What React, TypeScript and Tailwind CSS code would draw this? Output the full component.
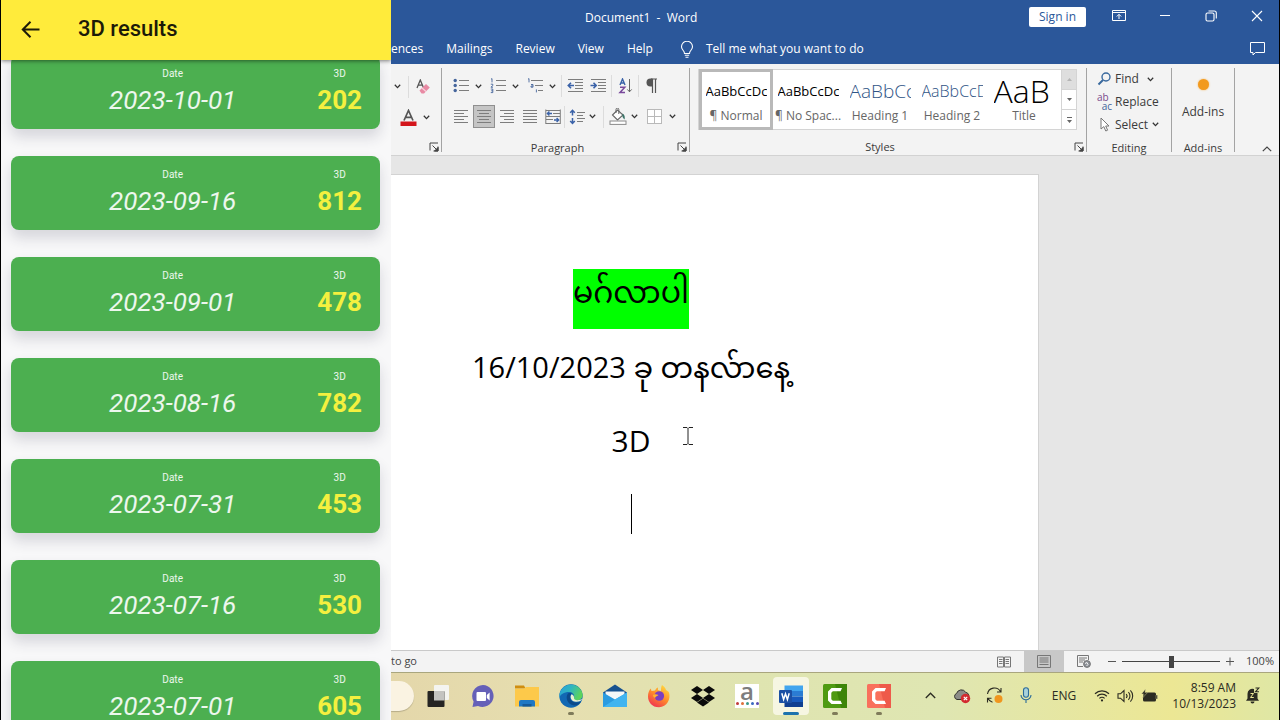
import type { ReactNode } from 'react';

interface Result {
  date: string;
  number: string;
}

interface StyleItem {
  name: string;
  sample: string;
  sampleClass: string;
  active?: boolean;
}

interface TaskApp {
  name: string;
  icon: ReactNode;
  state?: 'open' | 'active';
}

const results: Result[] = [
  { date: '2023-10-01', number: '202' },
  { date: '2023-09-16', number: '812' },
  { date: '2023-09-01', number: '478' },
  { date: '2023-08-16', number: '782' },
  { date: '2023-07-31', number: '453' },
  { date: '2023-07-16', number: '530' },
  { date: '2023-07-01', number: '605' },
];

const styleItems: StyleItem[] = [
  { name: '¶ Normal', sample: 'AaBbCcDc', sampleClass: 'text-[13px] text-black', active: true },
  { name: '¶ No Spac...', sample: 'AaBbCcDc', sampleClass: 'text-[13px] text-black' },
  { name: 'Heading 1', sample: 'AaBbCc', sampleClass: 'text-[19px] font-light text-[#2f5486]' },
  { name: 'Heading 2', sample: 'AaBbCcD', sampleClass: 'text-[16px] font-light text-[#2f5486]' },
  { name: 'Title', sample: 'AaB', sampleClass: 'text-[32px] font-light text-black' },
];

/* ---------- phone ---------- */

function ResultCard({ date, number }: Result) {
  return (
    <li className="flex justify-between rounded-lg bg-[#4caf50] py-[13px] pr-[18px] pl-[98px] shadow-[0_8px_14px_rgba(40,40,70,0.16)]">
      <div className="flex flex-col items-center gap-1">
        <span className="text-[10px] leading-3 text-white/90">Date</span>
        <span className="text-[26px] leading-8 text-white/90 italic">{date}</span>
      </div>
      <div className="flex flex-col items-center gap-1">
        <span className="text-[10px] leading-3 text-white/90">3D</span>
        <span className="text-[26px] leading-8 font-bold text-[#f4f03f]">{number}</span>
      </div>
    </li>
  );
}

function PhonePanel() {
  return (
    <aside className="flex w-[391px] shrink-0 flex-col overflow-hidden border-l border-black bg-[#f8f8f9] font-['Roboto',sans-serif]">
      <header className="relative z-10 flex h-[60px] shrink-0 items-center gap-9 bg-[#ffeb3b] pb-0.5 pl-[19px] shadow-[0_1px_4px_rgba(0,0,0,0.5)]">
        <button aria-label="Back" className="mt-0.5">
          <svg width="22" height="22" viewBox="0 0 22 22" fill="none" stroke="#1c1a08" strokeWidth="2">
            <path d="M19.5 10.5H3.5M10.5 2.8L2.8 10.5l7.7 7.7" />
          </svg>
        </button>
        <h1 className="text-[22px] leading-7 font-medium text-[#1c1a08]">3D results</h1>
      </header>
      <ul className="-mt-[5px] flex flex-col gap-[27px] pr-[11px] pl-2.5">
        {results.map((r) => (
          <ResultCard key={r.date} {...r} />
        ))}
      </ul>
    </aside>
  );
}

/* ---------- small ribbon parts ---------- */

function Chevron({ className = 'w-[18px]' }: { className?: string }) {
  return (
    <span className={`flex shrink-0 justify-center ${className}`}>
      <svg width="7" height="5" viewBox="0 0 7 5" fill="none" stroke="#333" strokeWidth="1.3">
        <path d="M0.8 0.8L3.5 3.6L6.2 0.8" />
      </svg>
    </span>
  );
}

function Sep({ className = '' }: { className?: string }) {
  return <span className={`h-[22px] w-px shrink-0 bg-[#dcdcdc] ${className}`} />;
}

function Launcher({ label }: { label: string }) {
  return (
    <button aria-label={label} className="absolute right-0.5 bottom-0">
      <svg width="10" height="10" viewBox="0 0 10 10" fill="none" stroke="#444" strokeWidth="1">
        <path d="M1 8.5V1H9M3.5 3.5L8 8M9 4.5V9H4.5" />
        <path d="M5.5 9H9V5.5Z" fill="#444" />
      </svg>
    </button>
  );
}

// Horizontal rules given as [x1, x2, y] on a 16px grid
function Lines({ rows, children }: { rows: number[][]; children?: ReactNode }) {
  return (
    <svg className="shrink-0" width="16" height="16" viewBox="0 0 16 16" fill="none">
      {rows.map(([a, b, y]) => (
        <path key={`${a}-${y}`} d={`M${a} ${y}H${b}`} stroke="#7d7d7d" />
      ))}
      {children}
    </svg>
  );
}

const alignLeft = [[1, 15, 1.5], [1, 11, 4.5], [1, 15, 7.5], [1, 11, 10.5], [1, 15, 13.5]];
const alignCenter = [[1, 15, 1.5], [3, 13, 4.5], [1, 15, 7.5], [3, 13, 10.5], [1, 15, 13.5]];
const alignRight = [[1, 15, 1.5], [5, 15, 4.5], [1, 15, 7.5], [5, 15, 10.5], [1, 15, 13.5]];
const justify = [[1, 15, 1.5], [1, 15, 4.5], [1, 15, 7.5], [1, 15, 10.5], [1, 15, 13.5]];
const indentRows = [[1, 16, 1.5], [8, 16, 4.5], [8, 16, 7.5], [8, 16, 10.5], [1, 16, 13.5]];

function Tool({ label, active, children }: { label: string; active?: boolean; children: ReactNode }) {
  return (
    <button
      aria-label={label}
      className={`flex h-[23px] w-[22px] shrink-0 items-center justify-center ${active ? 'border border-[#8f8f8f] bg-[#c5c5c5]' : ''}`}
    >
      {children}
    </button>
  );
}

function FontGroup() {
  return (
    <section className="relative flex w-[51px] shrink-0 flex-col border-r border-[#a3a3a3]">
      <div className="mt-[7px] flex h-[23px] items-center">
        <Chevron className="w-[13px]" />
        <Sep className="mr-[7px] ml-1" />
        <button aria-label="Clear formatting">
          <svg width="16" height="16" viewBox="0 0 16 16">
            <path d="M1 9L4.3 1L7.6 9M2.3 6.2H6.4" fill="none" stroke="#555" strokeWidth="1.3" />
            <path d="M3.5 11.5L10 5L13.8 8.5L8 14.5H5.5Z" fill="#e88aa4" />
            <path d="M6 9L10 12.5" stroke="#f8d3dc" strokeWidth="1.2" />
          </svg>
        </button>
      </div>
      <div className="mt-2 flex h-[23px] items-center pl-[9px]">
        <button aria-label="Font color">
          <svg width="17" height="18" viewBox="0 0 17 18">
            <path d="M4 11.5L8.5 1.5L13 11.5M5.6 8.3H11.4" fill="none" stroke="#555" strokeWidth="1.7" />
            <rect x="0.5" y="12.5" width="16" height="4.5" fill="#d3151b" />
          </svg>
        </button>
        <Chevron />
      </div>
      <Launcher label="Font settings" />
    </section>
  );
}

function ParagraphGroup() {
  return (
    <section className="relative flex w-[248px] shrink-0 flex-col border-r border-[#a3a3a3]">
      <div className="mt-[7px] flex h-[23px] items-center pl-[11px]">
        <button aria-label="Bullets" className="flex items-center">
          <Lines rows={[[6, 16, 2.5], [6, 16, 7.5], [6, 16, 12.5]]}>
            <circle cx="2.2" cy="2.5" r="1.7" fill="#45659c" />
            <circle cx="2.2" cy="7.5" r="1.7" fill="#45659c" />
            <circle cx="2.2" cy="12.5" r="1.7" fill="#45659c" />
          </Lines>
          <Chevron />
        </button>
        <button aria-label="Numbering" className="ml-[3px] flex items-center">
          <Lines rows={[[6, 16, 2.5], [6, 16, 7.5], [6, 16, 12.5]]}>
            <path
              d="M1 1.2L2 0.6V4.4M0.8 6.2H2.8V7.6L0.9 9.2H3M0.8 11H2.8V14.6H0.8M1.2 12.8H2.8"
              stroke="#45659c"
              strokeWidth="0.9"
            />
          </Lines>
          <Chevron />
        </button>
        <button aria-label="Multilevel list" className="ml-[3px] flex items-center">
          <Lines rows={[[4, 16, 2.5], [8, 16, 7.5], [11, 16, 12.5]]}>
            <path d="M1 1.2L2 0.6V4.4M4 6.5H6V9.2H4V8H6M9.4 11.4V14.4" stroke="#45659c" strokeWidth="0.9" />
          </Lines>
          <Chevron />
        </button>
        <Sep className="mr-[5px]" />
        <button aria-label="Decrease indent">
          <Lines rows={indentRows}>
            <path d="M7 7.5H1.5M4 4.8L1.3 7.5L4 10.2" stroke="#3a62a8" strokeWidth="1.6" />
          </Lines>
        </button>
        <button aria-label="Increase indent" className="ml-[7px]">
          <Lines rows={indentRows}>
            <path d="M0.5 7.5H6M3.5 4.8L6.2 7.5L3.5 10.2" stroke="#3a62a8" strokeWidth="1.6" />
          </Lines>
        </button>
        <Sep className="mx-[5px]" />
        <button aria-label="Sort">
          <svg width="16" height="16" viewBox="0 0 16 16" fill="none">
            <path d="M3 7L5.5 1L8 7M3.9 5H7.1" stroke="#3a62a8" strokeWidth="1.4" />
            <path d="M3 9.2H7.8L3 14.4H8" stroke="#7a4a9c" strokeWidth="1.5" />
            <path d="M12.5 1V14M10.3 11.4L12.5 13.8L14.7 11.4" stroke="#666" />
          </svg>
        </button>
        <Sep className="mx-[5px]" />
        <button aria-label="Show paragraph marks">
          <svg width="16" height="16" viewBox="0 0 16 16">
            <path d="M7 1H13M8.5 1V15M11.5 1V15" fill="none" stroke="#555" strokeWidth="1.2" />
            <path d="M8.5 0.5H6.5A4 4 0 0 0 6.5 8.5H8.5Z" fill="#555" />
          </svg>
        </button>
      </div>
      <div className="mt-2 flex h-[23px] items-center pl-2">
        <div className="flex gap-px">
          <Tool label="Align left"><Lines rows={alignLeft} /></Tool>
          <Tool label="Center" active><Lines rows={alignCenter} /></Tool>
          <Tool label="Align right"><Lines rows={alignRight} /></Tool>
          <Tool label="Justify"><Lines rows={justify} /></Tool>
          <Tool label="Distributed">
            <Lines rows={[[1, 15, 1.5], [8, 15, 4.5], [1, 15, 7.5], [1, 8, 10.5], [1, 15, 14.5]]}>
              <path d="M0.8 0.5V15M15.3 0.5V15" stroke="#7d7d7d" />
              <path d="M7 4.5H2.5M4.4 2.6L2.4 4.5L4.4 6.4M9 11H13.5M11.6 9.1L13.6 11L11.6 12.9" stroke="#3a62a8" strokeWidth="1.4" />
            </Lines>
          </Tool>
        </div>
        <Sep className="mr-1" />
        <button aria-label="Line spacing" className="flex items-center">
          <Lines rows={[[8, 16, 3.5], [8, 14, 6.5], [8, 16, 9.5], [8, 14, 12.5]]}>
            <path d="M3.5 1.5V6.5M1.2 3.7L3.5 1.3L5.8 3.7M3.5 9V14M1.2 12L3.5 14.4L5.8 12" stroke="#3a62a8" strokeWidth="1.5" />
          </Lines>
          <Chevron className="w-3.5" />
        </button>
        <Sep className="mr-[5px] ml-1" />
        <button aria-label="Shading" className="flex items-center">
          <svg width="18" height="17" viewBox="0 0 18 17" fill="none">
            <path d="M3.5 7L8.5 2L14 7L8.5 12Z" stroke="#666" strokeWidth="1.1" fill="#fff" />
            <path d="M7 5V1.5A1.4 1.4 0 0 1 9.8 1.5V6" stroke="#666" />
            <path d="M13.5 5.5C16 7 16 9 15.6 11.5C13.5 10 13 8.5 13.5 5.5Z" fill="#3a7468" />
            <rect x="1" y="13" width="16" height="3.4" fill="#fff" stroke="#8a8a8a" />
          </svg>
          <Chevron className="w-3.5" />
        </button>
        <button aria-label="Borders" className="ml-1.5 flex items-center">
          <svg width="16" height="16" viewBox="0 0 16 16" fill="#fff" stroke="#b9b9b9">
            <rect x="0.5" y="0.5" width="14" height="14" />
            <path d="M7.5 1V14M1 7.5H14" />
          </svg>
          <Chevron />
        </button>
      </div>
      <span className="mt-3 pr-4 text-center text-[11px] leading-4">Paragraph</span>
      <Launcher label="Paragraph settings" />
    </section>
  );
}

function StylesGroup() {
  return (
    <section className="relative flex w-[397px] shrink-0 flex-col border-r border-[#a3a3a3] px-2">
      <div className="mt-px flex h-[61px] w-[379px] shrink-0 border border-[#d4d4d4] bg-white pl-px">
        {styleItems.map((s) => (
          <button
            key={s.name}
            className={`flex w-[72px] shrink-0 flex-col items-center ${s.active ? 'outline-3 -outline-offset-2 outline-[#b9b9b9]' : ''}`}
          >
            <span className={`mt-1 h-[34px] w-[61px] overflow-hidden text-left leading-[34px] whitespace-nowrap ${s.sampleClass}`}>
              {s.sample}
            </span>
            <span className="text-[12px] leading-4 whitespace-nowrap text-[#666]">{s.name}</span>
          </button>
        ))}
        <div className="ml-auto flex w-[15px] flex-col divide-y divide-[#d4d4d4] border-l border-[#d4d4d4]">
          <button aria-label="Previous styles" className="flex flex-1 items-center justify-center bg-[#dedede]">
            <svg width="5" height="3" viewBox="0 0 5 3"><path d="M0 3L2.5 0L5 3Z" fill="#b5b5b5" /></svg>
          </button>
          <button aria-label="Next styles" className="flex flex-1 items-center justify-center">
            <svg width="5" height="3" viewBox="0 0 5 3"><path d="M0 0L2.5 3L5 0Z" fill="#666" /></svg>
          </button>
          <button aria-label="More styles" className="flex flex-1 items-center justify-center">
            <svg width="5" height="6" viewBox="0 0 5 6"><path d="M0 0H5V1H0ZM0 3L2.5 6L5 3Z" fill="#666" /></svg>
          </button>
        </div>
      </div>
      <span className="mt-[9px] pr-4 text-center text-[11px] leading-4">Styles</span>
      <Launcher label="Styles settings" />
    </section>
  );
}

function EditingGroup() {
  return (
    <section className="flex w-[85px] shrink-0 flex-col border-r border-[#a3a3a3] text-[12px]">
      <div className="flex flex-col pl-2.5">
        <button className="flex h-[22px] items-center gap-[3px]">
          <svg width="15" height="14" viewBox="0 0 15 14" fill="none">
            <circle cx="9" cy="5" r="4" stroke="#39699e" strokeWidth="1.4" />
            <path d="M6 8L1.5 12.5" stroke="#39699e" strokeWidth="2" />
          </svg>
          Find
          <Chevron />
        </button>
        <button className="flex h-[23px] items-center gap-[3px]">
          <span className="flex w-[15px] flex-col text-left text-[10px] leading-[9px] text-[#7a4a8c]">
            ab
            <span className="text-right text-[#45659c]">ac</span>
          </span>
          Replace
        </button>
        <button className="flex h-[23px] items-center gap-[3px]">
          <svg width="15" height="15" viewBox="0 0 15 15" fill="#fff" stroke="#777">
            <path d="M4 1V12L6.8 9.6L8.8 14L10.6 13.2L8.7 9H12Z" />
          </svg>
          Select
          <Chevron className="-ml-px w-2.5" />
        </button>
      </div>
      <span className="mt-1 text-center text-[11px] leading-4">Editing</span>
    </section>
  );
}

function Ribbon() {
  return (
    <div className="flex h-[92px] shrink-0 border-b border-[#d2d2d2] bg-[#f3f3f3] pt-1 pb-[3px] text-[#3b3b3b]">
      <FontGroup />
      <ParagraphGroup />
      <StylesGroup />
      <EditingGroup />
      <section className="flex w-[63px] shrink-0 flex-col items-center border-r border-[#a3a3a3]">
        <button className="flex flex-col items-center text-[12px] leading-4">
          <span className="mt-[11px] mb-3.5 size-[11px] rounded-full bg-[#f29a1f] shadow-[0_0_2px_#f5b55a]" />
          Add-ins
        </button>
        <span className="mt-5 text-[11px] leading-4">Add-ins</span>
      </section>
      <button aria-label="Collapse ribbon" className="mt-auto mr-[7px] ml-auto">
        <svg width="10" height="6" viewBox="0 0 10 6" fill="none" stroke="#444" strokeWidth="1.2">
          <path d="M0.8 5.2L5 1L9.2 5.2" />
        </svg>
      </button>
    </div>
  );
}

/* ---------- Word window ---------- */

function TitleBar() {
  return (
    <header className="shrink-0 bg-[#2b579a] text-[12px] text-white">
      <div className="flex h-[34px] items-center">
        <span className="ml-[194px] pt-0.5 whitespace-pre">Document1  -  Word</span>
        <button className="mr-[26px] ml-auto h-5 w-[57px] rounded-xs bg-white text-[#2b579a]">Sign in</button>
        <div className="flex items-center gap-8 pr-[15px] pb-0.5">
          <button aria-label="Ribbon display options">
            <svg width="14" height="12" viewBox="0 0 14 12" fill="none" stroke="#fff">
              <path d="M0.5 0.5H13.5V10.5H0.5ZM0.5 2.5H13.5M7 9V4.5M4.8 6.5L7 4.3L9.2 6.5" />
            </svg>
          </button>
          <button aria-label="Minimize">
            <svg width="14" height="12" viewBox="0 0 14 12"><path d="M2 5.5H12" stroke="#fff" /></svg>
          </button>
          <button aria-label="Restore">
            <svg width="14" height="12" viewBox="0 0 14 12" fill="none" stroke="#fff" strokeWidth="1.1">
              <rect x="2" y="3" width="8" height="8" rx="1.5" />
              <path d="M4.5 1H10.3A2 2 0 0 1 12.3 3V8.5" />
            </svg>
          </button>
          <button aria-label="Close">
            <svg width="14" height="12" viewBox="0 0 14 12" stroke="#fff" strokeWidth="1.1">
              <path d="M2 1L12 11M12 1L2 11" />
            </svg>
          </button>
        </div>
      </div>
      <nav className="flex h-[30px] items-center gap-[23px] whitespace-nowrap">
        <a href="#references">ences</a>
        <a href="#mailings">Mailings</a>
        <a href="#review">Review</a>
        <a href="#view">View</a>
        <a href="#help">Help</a>
        <button className="ml-1 flex items-center gap-3">
          <svg width="14" height="17" viewBox="0 0 14 17" fill="none" stroke="#fff" strokeWidth="1.1">
            <path d="M4.5 12.5C4.5 9.5 1.5 9 1.5 5.8A5.4 5.4 0 0 1 12.5 5.8C12.5 9 9.5 9.5 9.5 12.5ZM4.8 14.3H9.2M5.5 16.2H8.5" />
          </svg>
          Tell me what you want to do
        </button>
        <button aria-label="Comments" className="mr-3.5 ml-auto">
          <svg width="16" height="14" viewBox="0 0 16 14" fill="none" stroke="#fff">
            <path d="M1.5 0.5H15.5V10.5H6.5L4 13V10.5H1.5Z" />
          </svg>
        </button>
      </nav>
    </header>
  );
}

function DocumentArea() {
  return (
    <main className="min-h-0 flex-1 overflow-hidden bg-[#e6e6e6] pt-[18px]">
      <div className="mr-60 flex h-full flex-col items-center border-t border-r border-[#d3d3d3] bg-white pt-[94px] pr-[167px] font-['Open_Sans','Noto_Sans_Myanmar','Padauk',sans-serif] text-[30px] leading-[60px] whitespace-nowrap text-black">
        <p className="h-[60px] bg-[#00ff00] leading-[46px]">မဂ်လာပါ</p>
        <p className="mt-2 text-[29px]">16/10/2023 ခု တနလ်ာနေ့</p>
        <div className="relative mt-3.5">
          <p>3D</p>
          <svg className="absolute top-4 left-[70px]" width="12" height="18" viewBox="0 0 12 18" fill="none" stroke="#222">
            <path d="M1 0.5H5L6 1.5L7 0.5H11M6 1.5V16.5M1 17.5H5L6 16.5L7 17.5H11" />
          </svg>
        </div>
        <span className="mt-[23px] h-10 w-px bg-black" />
      </div>
    </main>
  );
}

function StatusBar() {
  return (
    <footer className="flex h-[23px] shrink-0 items-center border-t border-b border-[#c9c9c9] border-b-[#a9a67e] bg-[#f3f3f3] text-[11px] text-[#444]">
      <span>to go</span>
      <div className="ml-auto flex h-full items-center">
        <button aria-label="Read mode" className="flex h-full w-10 items-center justify-center">
          <svg width="14" height="12" viewBox="0 0 14 12" fill="none" stroke="#777">
            <path d="M0.5 1H6.5V11H0.5ZM7.5 1H13.5V11H7.5ZM2 3.5H5.5M2 5.5H5.5M2 7.5H5.5M8.5 3.5H12M8.5 5.5H12M8.5 7.5H12" />
          </svg>
        </button>
        <button aria-label="Print layout" className="flex h-full w-10 items-center justify-center bg-[#c8c8c8]">
          <svg width="14" height="13" viewBox="0 0 14 13" fill="none" stroke="#777">
            <path d="M0.5 0.5H13.5V12.5H0.5ZM2.5 3H11.5M2.5 5H11.5M2.5 7H11.5M2.5 9.5H11.5" />
          </svg>
        </button>
        <button aria-label="Web layout" className="flex h-full w-10 items-center justify-center">
          <svg width="14" height="13" viewBox="0 0 14 13" fill="none" stroke="#777">
            <path d="M6 11.5H0.5V0.5H11.5V5M2 3H10M2 5H8M2 7H6" />
            <circle cx="10" cy="9" r="3.4" fill="#8b8f96" />
            <path d="M8 8.5L10 7.5L11 9.5L9.5 11" stroke="#f3f3f3" />
          </svg>
        </button>
      </div>
      <button aria-label="Zoom out" className="ml-1">
        <svg width="8" height="9" viewBox="0 0 8 9"><path d="M0 4.5H8" stroke="#555" /></svg>
      </button>
      <input
        type="range"
        aria-label="Zoom"
        min="0"
        max="100"
        defaultValue="50"
        className="mx-1.5 h-3 w-[98px] appearance-none bg-[linear-gradient(#444,#444)] bg-[length:100%_1px] bg-center bg-no-repeat [&::-webkit-slider-thumb]:h-3 [&::-webkit-slider-thumb]:w-[5px] [&::-webkit-slider-thumb]:appearance-none [&::-webkit-slider-thumb]:bg-[#444]"
      />
      <button aria-label="Zoom in">
        <svg width="8" height="9" viewBox="0 0 8 9"><path d="M0 4.5H8M4 0.5V8.5" stroke="#555" /></svg>
      </button>
      <span className="mr-[5px] ml-3">100%</span>
    </footer>
  );
}

/* ---------- taskbar ---------- */

function CamtasiaIcon({ color, light }: { color: string; light: string }) {
  return (
    <svg width="24" height="24" viewBox="0 0 24 24">
      <rect width="24" height="24" rx="1.5" fill={color} />
      <path d="M12 0H24V24H18Z" fill={light} />
      <path d="M19 4H8.5L5 7.5V16.5L8.5 20H19L17.6 16.8H9.8L8.3 15.3V8.7L9.8 7.2H17.6Z" fill="#fff" />
    </svg>
  );
}

const apps: TaskApp[] = [
  {
    name: 'Task view',
    icon: (
      <svg width="24" height="24" viewBox="0 0 24 24">
        <rect x="7" y="1" width="15" height="15" rx="1" fill="#f4f4f0" />
        <rect x="0.5" y="7" width="17" height="16" rx="1" fill="#252422" />
        <rect x="7" y="7" width="10.5" height="9.5" fill="#c3c3c0" />
      </svg>
    ),
  },
  {
    name: 'Chat',
    icon: (
      <svg width="24" height="24" viewBox="0 0 24 24">
        <path d="M12 1A11 11 0 1 1 7 22L1.5 23L2.6 17.5A11 11 0 0 1 12 1Z" fill="#6560b8" />
        <rect x="5.5" y="8" width="9.5" height="9" rx="1" fill="#fff" />
        <path d="M15.8 11L18.6 8.5V16.5L15.8 14Z" fill="#fff" />
      </svg>
    ),
  },
  {
    name: 'File Explorer',
    icon: (
      <svg width="24" height="24" viewBox="0 0 24 24">
        <path d="M0 1.5H9L10.5 4.5H0Z" fill="#cf8e10" />
        <path d="M0 4.8H9L11 3H24V22.5H0Z" fill="#fdc94a" />
        <path d="M4 22.5V18A2 2 0 0 1 6 16H18A2 2 0 0 1 20 18V22.5Z" fill="#1f78c4" />
        <path d="M7.5 22.5V20H16.5V22.5Z" fill="#165a99" />
      </svg>
    ),
  },
  {
    name: 'Edge',
    state: 'open',
    icon: (
      <svg width="24" height="24" viewBox="0 0 24 24">
        <defs>
          <linearGradient id="edgeTop" x1="0" y1="0" x2="1" y2="0.4">
            <stop offset="0" stopColor="#2a9fdc" />
            <stop offset="0.5" stopColor="#2fb5c0" />
            <stop offset="1" stopColor="#5bd35c" />
          </linearGradient>
        </defs>
        <circle cx="12" cy="12" r="11.7" fill="#1268b3" />
        <path d="M0.4 11A11.7 11.7 0 0 1 23.7 11C23.7 15 20 16.5 17 16.2C14 16 14.5 14.6 15 13.5C16 10 13 8 10 8C5 8 1 10.5 0.4 14Z" fill="url(#edgeTop)" />
        <path d="M9 9.5C6 13 8 20.5 15 21.5C18 21.8 21 20 22 17.6C17 20 11.5 18 11 13.5C10.8 11.5 12 10.5 13 10C12 9 10.5 8.6 9 9.5Z" fill="#0c4a8a" />
        <path d="M12.5 10.2C10.5 13 12 17.5 17 17.8C20 18 22.4 16.8 24 14.6C20 17 14.5 17 15 13.5C15.2 12 14 10.4 12.5 10.2Z" fill="#e9f0d0" />
      </svg>
    ),
  },
  {
    name: 'Mail',
    icon: (
      <svg width="24" height="24" viewBox="0 0 24 24">
        <path d="M0 8.5L12 0.5L24 8.5V12H0Z" fill="#17518f" />
        <path d="M2.5 7.5H21.5V16H2.5Z" fill="#f5f7f8" />
        <path d="M0 8.5L12 15.5L24 8.5V23H0Z" fill="#2b9be0" />
        <path d="M0 23L12 15.5L24 8.5V23Z" fill="#41b4f0" />
      </svg>
    ),
  },
  {
    name: 'Firefox',
    icon: (
      <svg width="24" height="24" viewBox="0 0 24 24">
        <defs>
          <linearGradient id="fox" x1="0.8" y1="0" x2="0.2" y2="1">
            <stop offset="0" stopColor="#ffdc3e" />
            <stop offset="0.5" stopColor="#ff8a2a" />
            <stop offset="1" stopColor="#ee2c55" />
          </linearGradient>
        </defs>
        <path d="M15 1C18 3 18.5 4.5 19 6C20 6.5 21 7 22 8.5C24 15 20 23 12 23.3C5 23.3 1 18 1 12.5C1 9 2 6.5 3.8 4.5L4.5 7L8 6.5C9 4.5 10 3.8 11 3.5L11 6L14 7C14 5 14 3 15 1Z" fill="url(#fox)" />
        <circle cx="12.3" cy="12" r="4.8" fill="#7a3fc0" />
        <path d="M6 11C8 9.5 10 10.5 11.5 11C10.5 12.5 8.5 12 8 14C7 13.5 6 12.5 6 11Z" fill="#ffb32e" />
      </svg>
    ),
  },
  {
    name: 'Dropbox',
    icon: (
      <svg width="24" height="24" viewBox="0 0 24 24" fill="#0a0a0a">
        <path d="M6 2L12 6L6 10L0 6ZM18 2L24 6L18 10L12 6ZM6 10L12 14L6 18L0 14ZM18 10L24 14L18 18L12 14ZM6 18.5L12 14.5L18 18.5L12 22.5Z" />
      </svg>
    ),
  },
  {
    name: 'Amazon assistant',
    icon: (
      <span className="flex size-6 flex-col items-center bg-white">
        <span className="h-[18px] text-[24px] leading-[13px] font-semibold text-[#7d7d7d]">a</span>
        <span className="flex gap-0.5">
          <i className="size-[3px] rounded-full bg-[#c03a3a]" />
          <i className="size-[3px] rounded-full bg-[#e0703a]" />
          <i className="size-[3px] rounded-full bg-[#3a9a8a]" />
          <i className="size-[3px] rounded-full bg-[#3a6ac0]" />
          <i className="size-[3px] rounded-full bg-[#5a4ab0]" />
        </span>
      </span>
    ),
  },
  {
    name: 'Word',
    state: 'active',
    icon: (
      <svg width="24" height="24" viewBox="0 0 24 24">
        <path d="M5.5 1.5H24V7H5.5Z" fill="#41a5ee" />
        <path d="M5.5 7H24V12.5H5.5Z" fill="#2b7cd3" />
        <path d="M5.5 12.5H24V18H5.5Z" fill="#185abd" />
        <path d="M5.5 18H24V23H5.5Z" fill="#103f91" />
        <rect x="0" y="6" width="13" height="13" rx="1" fill="#1c50a4" />
        <path d="M2.8 9.3L4.6 15.5L6.5 9.8L8.4 15.5L10.2 9.3" fill="none" stroke="#fff" strokeWidth="1.5" />
      </svg>
    ),
  },
  { name: 'Camtasia', state: 'open', icon: <CamtasiaIcon color="#4f9a12" light="#3d8508" /> },
  { name: 'Camtasia Recorder', state: 'open', icon: <CamtasiaIcon color="#f9705c" light="#ee5a4a" /> },
];

function TaskButton({ app }: { app: TaskApp }) {
  return (
    <button
      aria-label={app.name}
      className={`relative flex h-[38px] w-9 items-center justify-center rounded ${app.state === 'active' ? 'bg-[#f6f6e2]' : ''}`}
    >
      {app.icon}
      {app.state === 'open' && <span className="absolute bottom-0 h-[3px] w-1.5 rounded-full bg-[#7f7b5a]" />}
      {app.state === 'active' && <span className="absolute bottom-0 h-[3px] w-4 rounded-full bg-[#1c73ad]" />}
    </button>
  );
}

function Taskbar() {
  return (
    <footer className="flex h-[47px] shrink-0 items-center bg-[linear-gradient(90deg,#e4d7aa,#e6dfb0_20%,#dfe4b0_40%,#dfe6b2_62%,#ece794_88%,#dfe7a5)] pb-0.5 text-[12px] text-[#2b2b22]">
      <span className="h-[30px] w-[23px] rounded-r-full bg-[#faf3e2] shadow-[0_1px_1px_rgba(0,0,0,0.2)]" />
      <div className="ml-[7px] flex gap-2">
        {apps.map((app) => (
          <TaskButton key={app.name} app={app} />
        ))}
      </div>
      <div className="ml-auto flex items-center pr-[19px]">
        <button aria-label="Hidden icons" className="flex w-8 justify-center">
          <svg width="11" height="7" viewBox="0 0 11 7" fill="none" stroke="#2b2b22" strokeWidth="1.3">
            <path d="M0.8 6L5.5 1.2L10.2 6" />
          </svg>
        </button>
        <button aria-label="OneDrive" className="flex w-8 justify-center">
          <svg width="18" height="16" viewBox="0 0 18 16">
            <path d="M4 11.5A3.2 3.2 0 0 1 3.6 5.4A5 5 0 0 1 12.6 4.2A4 4 0 0 1 14 11.5Z" fill="#8c8c88" stroke="#33332e" />
            <circle cx="12.5" cy="10.5" r="4.7" fill="#d22a2f" />
            <path d="M10.8 8.8L14.2 12.2M14.2 8.8L10.8 12.2" stroke="#fff" strokeWidth="1.2" />
          </svg>
        </button>
        <button aria-label="Updates" className="flex w-8 justify-center">
          <svg width="17" height="17" viewBox="0 0 17 17" fill="none" stroke="#2b2b22" strokeWidth="1.1">
            <path d="M1.5 7A7 7 0 0 1 14.5 4.5M15 1V5H11M6.5 15.2A7 7 0 0 1 2 11.5M1.5 15.5V11.3H5.5" />
            <circle cx="12.5" cy="12" r="4" fill="#f0961e" stroke="none" />
          </svg>
        </button>
        <button aria-label="Microphone" className="flex w-8 justify-center">
          <svg width="12" height="17" viewBox="0 0 12 17" fill="none" stroke="#2a6a9a" strokeWidth="1.1">
            <rect x="3.5" y="0.7" width="5" height="9.5" rx="2.5" fill="#a8d2dc" />
            <path d="M1 8A5 4.8 0 0 0 11 8M6 12.8V16" />
          </svg>
        </button>
        <button className="w-11 text-center">ENG</button>
        <button aria-label="Network, volume and battery" className="flex items-center gap-[7px] px-2">
          <svg width="16" height="13" viewBox="0 0 16 13" fill="none" stroke="#2b2b22" strokeWidth="1.2">
            <path d="M1 4.8A10 10 0 0 1 15 4.8M3.2 7.2A6.8 6.8 0 0 1 12.8 7.2M5.4 9.4A3.7 3.7 0 0 1 10.6 9.4" />
            <circle cx="8" cy="11.4" r="1.1" fill="#2b2b22" stroke="none" />
          </svg>
          <svg width="17" height="14" viewBox="0 0 17 14" fill="none" stroke="#2b2b22" strokeWidth="1.1">
            <path d="M1 4.8H3.5L7 1.5V12.5L3.5 9.2H1ZM9.2 5A3 3 0 0 1 9.2 9M11.4 3.2A5.4 5.4 0 0 1 11.4 10.8M13.4 1.4A8 8 0 0 1 13.4 12.6" />
          </svg>
          <svg width="17" height="14" viewBox="0 0 17 14" fill="#2b2b22">
            <rect x="2" y="3.5" width="13" height="9" rx="1.5" />
            <path d="M15 6H16.5V10H15ZM4.5 0L0.5 5H3L1.5 9L6.5 3.6H4Z" stroke="#e8e69c" strokeWidth="0.4" />
          </svg>
        </button>
        <button className="w-[70px] text-right leading-4">
          8:59 AM
          <br />
          10/13/2023
        </button>
        <button aria-label="Notifications" className="ml-2.5">
          <svg width="14" height="17" viewBox="0 0 14 17" fill="#2b2b22">
            <path d="M1.5 7A5 5 0 0 1 8 2V6H11.5V11.5L13 13.8H0L1.5 11.5ZM4.5 14.6H8.5A2 2 0 0 1 4.5 14.6Z" />
            <path d="M9.5 1H12.8L9.5 4.8H13" fill="none" stroke="#2b2b22" strokeWidth="1.1" />
            <path d="M4.5 6.5H7.5L4.5 10.5H7.8" fill="none" stroke="#ece794" strokeWidth="1" />
          </svg>
        </button>
      </div>
    </footer>
  );
}

export default function App() {
  return (
    <div className="flex h-screen overflow-hidden">
      <PhonePanel />
      <div className="flex min-w-0 flex-1 flex-col overflow-hidden border-r border-black font-['Open_Sans',sans-serif]">
        <TitleBar />
        <Ribbon />
        <DocumentArea />
        <StatusBar />
        <Taskbar />
      </div>
    </div>
  );
}
